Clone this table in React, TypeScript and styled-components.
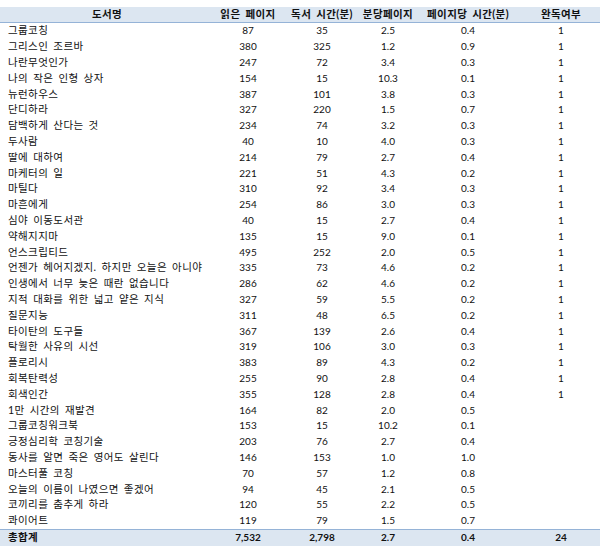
import React from "react";
import styled, { createGlobalStyle, css } from "styled-components";

const Global = createGlobalStyle`
  html, body { margin: 0; padding: 0; background: #fff; }
  body { font-family: "Lato", "Noto Sans CJK KR", sans-serif; color: #111; }
`;

type Row = [string, string, string, string, string, string];

const rows: Row[] = [
  ["그룹코칭", "87", "35", "2.5", "0.4", "1"],
  ["그리스인 조르바", "380", "325", "1.2", "0.9", "1"],
  ["나란무엇인가", "247", "72", "3.4", "0.3", "1"],
  ["나의 작은 인형 상자", "154", "15", "10.3", "0.1", "1"],
  ["뉴런하우스", "387", "101", "3.8", "0.3", "1"],
  ["단디하라", "327", "220", "1.5", "0.7", "1"],
  ["담백하게 산다는 것", "234", "74", "3.2", "0.3", "1"],
  ["두사람", "40", "10", "4.0", "0.3", "1"],
  ["딸에 대하여", "214", "79", "2.7", "0.4", "1"],
  ["마케터의 일", "221", "51", "4.3", "0.2", "1"],
  ["마틸다", "310", "92", "3.4", "0.3", "1"],
  ["마흔에게", "254", "86", "3.0", "0.3", "1"],
  ["심야 이동도서관", "40", "15", "2.7", "0.4", "1"],
  ["약해지지마", "135", "15", "9.0", "0.1", "1"],
  ["언스크립티드", "495", "252", "2.0", "0.5", "1"],
  ["언젠가 헤어지겠지. 하지만 오늘은 아니야", "335", "73", "4.6", "0.2", "1"],
  ["인생에서 너무 늦은 때란 없습니다", "286", "62", "4.6", "0.2", "1"],
  ["지적 대화를 위한 넓고 얕은 지식", "327", "59", "5.5", "0.2", "1"],
  ["질문지능", "311", "48", "6.5", "0.2", "1"],
  ["타이탄의 도구들", "367", "139", "2.6", "0.4", "1"],
  ["탁월한 사유의 시선", "319", "106", "3.0", "0.3", "1"],
  ["플로리시", "383", "89", "4.3", "0.2", "1"],
  ["회복탄력성", "255", "90", "2.8", "0.4", "1"],
  ["회색인간", "355", "128", "2.8", "0.4", "1"],
  ["1만 시간의 재발견", "164", "82", "2.0", "0.5", ""],
  ["그룹코칭워크북", "153", "15", "10.2", "0.1", ""],
  ["긍정심리학 코칭기술", "203", "76", "2.7", "0.4", ""],
  ["동사를 알면 죽은 영어도 살린다", "146", "153", "1.0", "1.0", ""],
  ["마스터풀 코칭", "70", "57", "1.2", "0.8", ""],
  ["오늘의 이름이 나였으면 좋겠어", "94", "45", "2.1", "0.5", ""],
  ["코끼리를 춤추게 하라", "120", "55", "2.2", "0.5", ""],
  ["콰이어트", "119", "79", "1.5", "0.7", ""],
];

const headers: Row = ["도서명", "읽은 페이지", "독서 시간(분)", "분당페이지", "페이지당 시간(분)", "완독여부"];
const total: Row = ["총합계", "7,532", "2,798", "2.7", "0.4", "24"];

const Page = styled.div`
  width: 600px;
  padding-top: 7px;
`;

const Table = styled.div`
  display: flex;
  flex-direction: column;
  width: 600px;
`;

const RowBase = styled.div<{ $kind: "head" | "body" | "total" }>`
  display: grid;
  grid-template-columns: 214px 68px 80px 52px 108px 78px;
  align-items: center;
  ${(p) =>
    p.$kind === "head" &&
    css`
      height: 15px;
      background: #dce6f1;
      border-bottom: 1px solid #95b3d7;
      font-weight: 700;
    `}
  ${(p) =>
    p.$kind === "body" &&
    css`
      height: 15.8px;
    `}
  ${(p) =>
    p.$kind === "total" &&
    css`
      height: 16px;
      background: #dce6f1;
      border-top: 1px solid #95b3d7;
      font-weight: 700;
    `}
`;

const Cell = styled.div<{ $align: "left" | "center"; $name?: boolean }>`
  text-align: ${(p) => p.$align};
  padding-left: ${(p) => (p.$align === "left" ? "8px" : "0")};
  font-size: ${(p) => (p.$name ? "10.5px" : "10px")};
  line-height: 15px;
  white-space: nowrap;
  letter-spacing: ${(p) => (p.$name ? "0.4px" : "0")};
  word-spacing: ${(p) => (p.$name ? "2px" : "0")};
  color: #111;
`;

function TableRow({ data, kind }: { data: Row; kind: "head" | "body" | "total" }) {
  return (
    <RowBase $kind={kind}>
      {data.map((v, i) => (
        <Cell key={i} $align={i === 0 && kind !== "head" ? "left" : "center"} $name={i === 0 || kind === "head"}>
          {v}
        </Cell>
      ))}
    </RowBase>
  );
}

export default function App() {
  return (
    <Page>
      <Global />
      <Table>
        <TableRow data={headers} kind="head" />
        {rows.map((r, i) => (
          <TableRow key={i} data={r} kind="body" />
        ))}
        <TableRow data={total} kind="total" />
      </Table>
    </Page>
  );
}
